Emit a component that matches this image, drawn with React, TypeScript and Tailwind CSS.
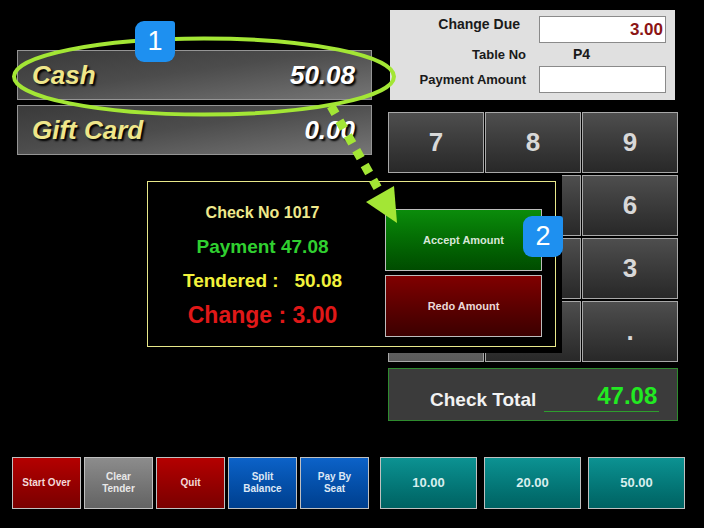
import React from "react";

const keyCls =
  "flex items-center justify-center border border-[#a8a8a8] bg-linear-to-b from-[#4e4e4e] to-[#282828] text-[26px] font-bold text-[#d8d8d8]";

function Key({ label, light }: { label: string; light?: boolean }) {
  return (
    <div
      className={
        light
          ? "flex items-center justify-center border border-[#a8a8a8] bg-linear-to-b from-[#7a7a7a] to-[#5a5a5a] text-[26px] font-bold text-[#d8d8d8]"
          : keyCls
      }
    >
      {label}
    </div>
  );
}

function TenderBar({ name, amount }: { name: string; amount: string }) {
  return (
    <div className="flex h-[50px] w-[355px] items-center justify-between border border-[#959595] bg-[linear-gradient(172deg,#3a3a3a_0%,#4c4c4c_45%,#767676_100%)] pl-[14px] pr-[16px] italic font-bold text-[26px] [text-shadow:2px_2px_2px_#000]">
      <span className="text-[#efe68a]">{name}</span>
      <span className="text-white">{amount}</span>
    </div>
  );
}

function SmallBtn({ children, cls }: { children: React.ReactNode; cls: string }) {
  return (
    <div
      className={
        "flex h-[52px] w-[69px] items-center justify-center border border-[#c0c0c0] text-center text-[10px] font-bold leading-[12px] " +
        cls
      }
    >
      {children}
    </div>
  );
}

export default function App() {
  return (
    <div className="relative h-[528px] w-[704px] overflow-hidden bg-black font-['Liberation_Sans',Arial,sans-serif]">
      <div className="flex">
        {/* left column */}
        <div className="flex w-[388px] flex-col gap-[5px] pl-[17px] pt-[50px]">
          <TenderBar name="Cash" amount="50.08" />
          <TenderBar name="Gift Card" amount="0.00" />
        </div>

        {/* right column */}
        <div className="flex w-[290px] flex-col pt-[10px]">
          <div className="ml-[2px] flex h-[90px] w-[285px] flex-col bg-[#e0e0e0] pt-[6px] text-[#1a1a1a]">
            <div className="flex h-[27px] items-start">
              <div className="w-[136px] pr-[6px] text-right text-[14px] font-bold leading-[17px]">
                Change Due
              </div>
              <div className="ml-[13px] h-[27px] w-[127px] border border-[#8a8a8a] bg-white pr-[2px] text-right text-[17px] font-bold leading-[25px] text-[#8b1414]">
                3.00
              </div>
            </div>
            <div className="flex h-[23px] items-center">
              <div className="w-[136px] text-right text-[13px] font-bold">Table No</div>
              <div className="ml-[47px] text-[14px] font-bold">P4</div>
            </div>
            <div className="flex h-[27px] items-center">
              <div className="w-[136px] text-right text-[13px] font-bold">Payment Amount</div>
              <div className="ml-[13px] h-[27px] w-[127px] border border-[#8a8a8a] bg-white" />
            </div>
          </div>

          <div className="mt-[12px] grid h-[250px] grid-cols-[96px_96px_96px] grid-rows-[61px_61px_61px_61px] gap-x-[1px] gap-y-[2px]">
            <Key label="7" />
            <Key label="8" />
            <Key label="9" />
            <Key label="4" />
            <Key label="5" />
            <Key label="6" />
            <Key label="1" />
            <Key label="2" />
            <Key label="3" />
            <Key label="0" light />
            <Key label="00" />
            <Key label="." />
          </div>

          <div className="mt-[6px] flex h-[53px] w-[290px] items-end border border-[#2e8b2e] bg-[#3b3b3b] pb-[8px] pl-[41px]">
            <span className="mb-[3px] text-[19px] font-bold leading-[19px] text-[#f2f2f2]">
              Check Total
            </span>
            <div className="ml-[8px] w-[115px] border-b border-[#2e9e2e] pb-[3px] pr-[2px] text-right text-[24px] font-bold leading-[24px] text-[#22ea22]">
              47.08
            </div>
          </div>
        </div>
      </div>

      {/* bottom buttons */}
      <div className="mt-[36px] flex h-[52px] pl-[12px]">
        <div className="flex gap-[3px]">
          <SmallBtn cls="bg-linear-to-b from-[#b40000] to-[#7a0000] text-[#f3dada]">Start Over</SmallBtn>
          <SmallBtn cls="bg-linear-to-b from-[#8c8c8c] to-[#636363] text-[#e8e8e8]">
            Clear
            <br />
            Tender
          </SmallBtn>
          <SmallBtn cls="bg-linear-to-b from-[#b40000] to-[#7a0000] text-[#f3dada]">Quit</SmallBtn>
          <SmallBtn cls="bg-linear-to-b from-[#0c62c8] to-[#003f8e] text-[#dde8f5]">
            Split
            <br />
            Balance
          </SmallBtn>
          <SmallBtn cls="bg-linear-to-b from-[#0c62c8] to-[#003f8e] text-[#dde8f5]">
            Pay By
            <br />
            Seat
          </SmallBtn>
        </div>
        <div className="ml-[11px] flex gap-[7px]">
          {["10.00", "20.00", "50.00"].map((v) => (
            <div
              key={v}
              className="flex h-[52px] w-[97px] items-center justify-center border border-[#c0c0c0] bg-linear-to-b from-[#0c9292] to-[#006262] text-[13px] font-bold text-[#d8eeee]"
            >
              {v}
            </div>
          ))}
        </div>
      </div>

      {/* popup */}
      <div className="absolute left-[141px] top-[175px] bg-black p-[6px]">
        <div className="flex h-[166px] w-[409px] border border-[#e8e88a]">
          <div className="flex w-[237px] flex-col items-center pr-[8px] pt-[14px] font-bold">
            <div className="flex h-[34px] items-center text-[16px] text-[#efe88c]">Check No 1017</div>
            <div className="flex h-[34px] items-center text-[19px] text-[#30d030]">Payment 47.08</div>
            <div className="flex h-[34px] items-center whitespace-pre text-[19px] text-[#f2f23c]">
              {"Tendered :   50.08"}
            </div>
            <div className="flex h-[34px] items-center text-[23px] text-[#e01818]">Change : 3.00</div>
          </div>
          <div className="flex w-[157px] flex-col gap-[4px] pt-[27px]">
            <div className="flex h-[62px] items-center justify-center border border-[#bdbdbd] bg-linear-to-b from-[#0b8c0b] to-[#004c00] text-[11px] font-bold text-[#d8e6d8]">
              Accept Amount
            </div>
            <div className="flex h-[62px] items-center justify-center border border-[#bdbdbd] bg-linear-to-b from-[#800000] to-[#3c0000] text-[11px] font-bold text-[#ecd8d8]">
              Redo Amount
            </div>
          </div>
        </div>
      </div>

      {/* annotations */}
      <svg className="pointer-events-none absolute left-0 top-0" width="704" height="528" viewBox="0 0 704 528">
        <ellipse cx="204" cy="76.5" rx="190" ry="38" fill="none" stroke="#a3e635" strokeWidth="4" />
        <line x1="331" y1="106" x2="380" y2="192" stroke="#a3e635" strokeWidth="9" strokeDasharray="9 8" />
        <polygon points="366,202 394,186 397,223" fill="#a3e635" />
      </svg>

      <div className="absolute left-[135px] top-[21px] flex h-[41px] w-[40px] items-center justify-center rounded-[9px_3px_9px_9px] bg-[#1e90f0] text-[27px] text-white">
        1
      </div>
      <div className="absolute left-[523px] top-[216px] flex h-[41px] w-[40px] items-center justify-center rounded-[9px_3px_9px_9px] bg-[#1e90f0] text-[27px] text-white">
        2
      </div>
    </div>
  );
}
